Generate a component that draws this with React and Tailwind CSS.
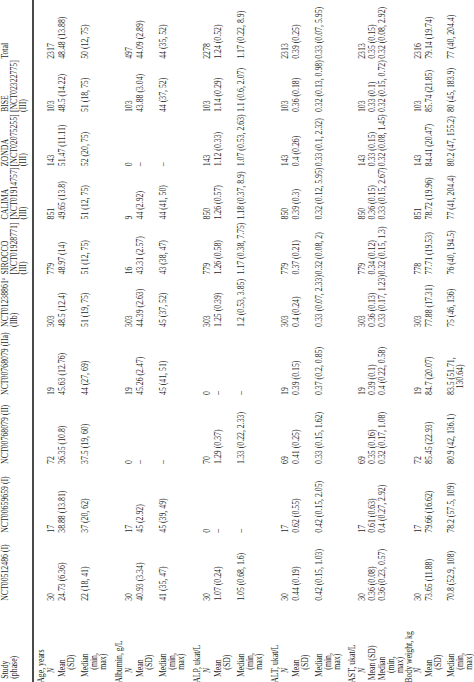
// Rotated journal table. The frame is laid out 832px wide, then squeezed to 682px
// along the text direction so the glyphs come out tall and narrow like the scan.
const grid =
  'grid grid-cols-[99px_83px_84px_84px_83px_64px_67px_65px_66px_65px_72px]';

const heads = [
  ['Study', '(phase)'],
  ['NCT00512486 (I)'],
  ['NCT00659659 (I)'],
  ['NCT00768079 (II)'],
  ['NCT00768079 (IIa)'],
  [
    <>
      NCT01238861<sup className="text-[6px]">a</sup>
    </>,
    '(IIb)',
  ],
  ['SIROCCO', '[NCT01928771]', '(III)'],
  ['CALIMA', '[NCT01914757]', '(III)'],
  ['ZONDA', '[NCT02075255]', '(III)'],
  ['BISE', '[NCT02322775]', '(III)'],
  ['Total'],
];

const sections = [
  {
    title: 'Age, years',
    gaps: ['mt-[3px]', 'mt-[1px]', 'mt-[2px]', 'mt-[5px]'],
    n: ['30', '17', '72', '19', '303', '779', '851', '143', '103', '2317'],
    mean: ['24.73 (6.36)', '38.88 (13.81)', '36.35 (10.8)', '45.63 (12.76)', '48.5 (12.4)', '48.97 (14)', '49.65 (13.8)', '51.47 (11.11)', '48.5 (14.22)', '48.48 (13.88)'],
    median: ['22 (18, 41)', '37 (20, 62)', '37.5 (19, 60)', '44 (27, 69)', '51 (19, 75)', '51 (12, 75)', '51 (12, 75)', '52 (20, 75)', '51 (18, 75)', '50 (12, 75)'],
  },
  {
    title: 'Albumin, g/L',
    gaps: ['mt-[7px]', 'mt-[1px]', 'mt-[2px]', 'mt-[5px]'],
    n: ['30', '17', '0', '19', '303', '16', '9', '0', '103', '497'],
    mean: ['40.93 (3.34)', '45 (2.92)', '–', '45.26 (2.47)', '44.39 (2.63)', '43.31 (2.57)', '44 (2.92)', '–', '43.88 (3.04)', '44.09 (2.89)'],
    median: ['41 (35, 47)', '45 (39, 49)', '–', '45 (41, 51)', '45 (37, 52)', '43 (38, 47)', '44 (41, 50)', '–', '44 (37, 52)', '44 (35, 52)'],
  },
  {
    title: 'ALP, ukat/L',
    gaps: ['mt-[7px]', 'mt-[1px]', 'mt-[2px]', 'mt-[5px]'],
    n: ['30', '0', '70', '0', '303', '779', '850', '143', '103', '2278'],
    mean: ['1.07 (0.24)', '–', '1.29 (0.37)', '–', '1.25 (0.39)', '1.26 (0.58)', '1.26 (0.57)', '1.12 (0.33)', '1.14 (0.29)', '1.24 (0.52)'],
    median: ['1.05 (0.68, 1.6)', '–', '1.33 (0.22, 2.33)', '–', '1.2 (0.53, 3.85)', '1.17 (0.38, 7.75)', '1.18 (0.37, 8.9)', '1.07 (0.53, 2.63)', '1.1 (0.6, 2.07)', '1.17 (0.22, 8.9)'],
  },
  {
    title: 'ALT, ukat/L',
    gaps: ['mt-[7px]', 'mt-[1px]', 'mt-[2px]', 'mt-[5px]'],
    n: ['30', '17', '69', '19', '303', '779', '850', '143', '103', '2313'],
    mean: ['0.44 (0.19)', '0.62 (0.55)', '0.41 (0.25)', '0.39 (0.15)', '0.4 (0.24)', '0.37 (0.21)', '0.39 (0.3)', '0.4 (0.26)', '0.36 (0.18)', '0.39 (0.25)'],
    median: ['0.42 (0.15, 1.03)', '0.42 (0.15, 2.05)', '0.33 (0.15, 1.62)', '0.37 (0.2, 0.85)', '0.33 (0.07, 2.33)', '0.32 (0.08, 2)', '0.32 (0.12, 5.95)', '0.33 (0.1, 2.32)', '0.32 (0.13, 0.98)', '0.33 (0.07, 5.95)'],
  },
  {
    title: 'AST, ukat/L',
    compact: true,
    gaps: ['mt-[6px]', 'mt-[1px]', 'mt-[1px]', 'mt-[1px]'],
    n: ['30', '17', '69', '19', '303', '779', '850', '143', '103', '2313'],
    mean: ['0.36 (0.08)', '0.61 (0.63)', '0.35 (0.16)', '0.39 (0.1)', '0.36 (0.13)', '0.34 (0.12)', '0.36 (0.15)', '0.33 (0.15)', '0.33 (0.1)', '0.35 (0.15)'],
    median: ['0.36 (0.23, 0.57)', '0.4 (0.27, 2.92)', '0.32 (0.17, 1.08)', '0.4 (0.22, 0.58)', '0.33 (0.17, 1.23)', '0.32 (0.15, 1.3)', '0.33 (0.15, 2.67)', '0.32 (0.08, 1.45)', '0.32 (0.15, 0.72)', '0.32 (0.08, 2.92)'],
  },
  {
    title: 'Body weight, kg',
    gaps: ['mt-0', 'mt-0', 'mt-[2px]', 'mt-[4px]'],
    n: ['30', '17', '72', '19', '303', '778', '851', '143', '103', '2316'],
    mean: ['73.65 (11.88)', '79.66 (16.62)', '85.45 (22.93)', '84.7 (20.07)', '77.88 (17.31)', '77.71 (19.53)', '78.72 (19.96)', '84.41 (20.47)', '85.74 (21.85)', '79.14 (19.74)'],
    median: ['70.8 (52.9, 108)', '78.2 (57.5, 109)', '80.9 (42, 136.1)', ['83.5 (51.71,', '130.64)'], '75 (46, 136)', '76 (40, 194.5)', '77 (41, 204.4)', '80.2 (47, 155.2)', '80 (45, 183.9)', '77 (40, 204.4)'],
  },
];

const Cells = ({ values }) =>
  values.map((v, i) => (
    <div key={i} className="whitespace-nowrap">
      {Array.isArray(v) ? (
        <>
          <div>{v[0]}</div>
          <div className="pl-[8px]">{v[1]}</div>
        </>
      ) : (
        v
      )}
    </div>
  ));

const Section = ({ s }) => (
  <>
    <div className={`${grid} ${s.gaps[0]}`}>
      <div className="col-span-11 -ml-[1px] whitespace-nowrap">{s.title}</div>
    </div>
    <div className={`${grid} ${s.gaps[1]}`}>
      <div className="pl-[11px] italic">N</div>
      <Cells values={s.n} />
    </div>
    <div className={`${grid} ${s.gaps[2]}`}>
      {s.compact ? (
        <div className="whitespace-nowrap pl-[2px]">Mean (SD)</div>
      ) : (
        <div className="pl-[6px]">
          <div>Mean</div>
          <div className="pl-[9px]">(SD)</div>
        </div>
      )}
      <Cells values={s.mean} />
    </div>
    <div className={`${grid} ${s.gaps[3]}`}>
      <div className={s.compact ? 'pl-[2px]' : 'pl-[6px]'}>
        <div>Median</div>
        <div className="pl-[9px]">(min,</div>
        <div className="pl-[9px]">max)</div>
      </div>
      <Cells values={s.median} />
    </div>
  </>
);

export default function App() {
  return (
    <div className="h-[682px] w-[474px] overflow-hidden bg-white">
      <div className="h-[474px] w-[832px] origin-top-left bg-white font-['Liberation_Serif','Times_New_Roman',serif] text-[9.5px] leading-[9px] text-[#1f1f1f] [transform:translateY(682px)_rotate(-90deg)_scaleX(0.82)]">
        <div className={`${grid} h-[34px] border-b-2 border-[#4a4a4a] pt-[1px]`}>
          {heads.map((h, i) => (
            <div key={i} className={`whitespace-nowrap ${i === 0 ? 'pl-[4px]' : ''}`}>
              {h.map((line, j) => (
                <div key={j}>{line}</div>
              ))}
            </div>
          ))}
        </div>
        {sections.map((s) => (
          <Section key={s.title} s={s} />
        ))}
      </div>
    </div>
  );
}
